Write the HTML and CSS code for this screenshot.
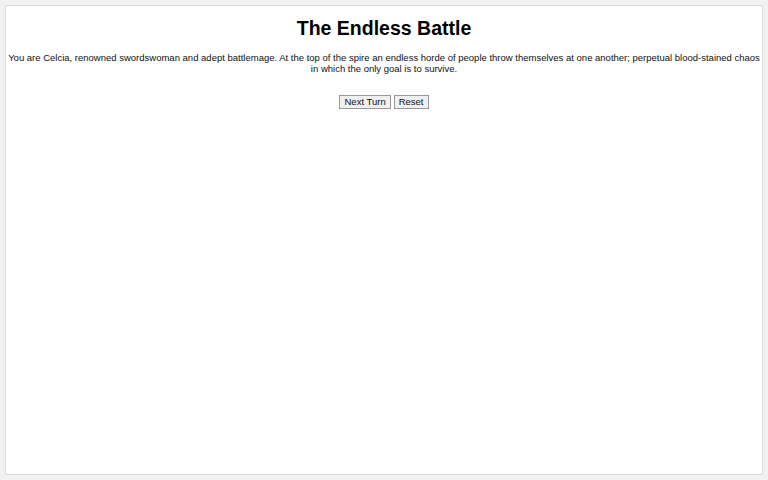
FILE: index.html
```html
<!DOCTYPE html>
<html lang="en">
<head>
<meta charset="utf-8">
<title>The Endless Battle</title>
<link rel="stylesheet" href="styles.css">
</head>
<body>
<main class="game">
  <h1 class="title">The Endless Battle</h1>
  <p class="intro">You are Celcia, renowned swordswoman and adept battlemage. At the top of the spire an endless horde of people throw themselves at one another; perpetual blood-stained chaos in which the only goal is to survive.</p>
  <div class="controls">
    <button class="btn" type="button">Next Turn</button>
    <button class="btn" type="button">Reset</button>
  </div>
</main>
</body>
</html>
```
FILE: styles.css
```css
html, body {
  margin: 0;
  height: 100%;
}

body {
  background: #f1f1f1;
  padding: 5px;
  box-sizing: border-box;
  font-family: "Liberation Sans", Arial, sans-serif;
  color: #000;
}

.game {
  background: #fff;
  border: 1px solid #dcdcdc;
  height: 100%;
  box-sizing: border-box;
  padding: 0;
  text-align: center;
}

.title {
  margin: 0;
  padding-top: 11px;
  font-size: 19.5px;
  font-weight: bold;
  line-height: 22px;
}

.intro {
  margin: 13px 0 0;
  font-size: 9.5px;
  line-height: 11px;
  color: #111;
}

.controls {
  margin-top: 21px;
  display: flex;
  justify-content: center;
  gap: 3px;
}

.btn {
  font-family: "Liberation Sans", Arial, sans-serif;
  font-size: 9.5px;
  line-height: 11px;
  padding: 0 4px 1px;
  background: #f0f0f0;
  border: 1px solid #9a9a9a;
  border-radius: 0;
  color: #111;
}
```
